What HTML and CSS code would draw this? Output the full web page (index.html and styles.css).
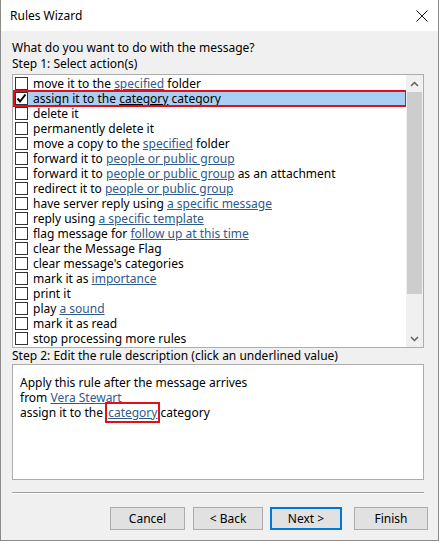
FILE: index.html
```html
<!DOCTYPE html>
<html lang="en">
<head>
    <meta charset="UTF-8">
    <title>Rules Wizard</title>
    <link rel="stylesheet" href="styles.css">
</head>
<body>
    <div class="dialog">
        <div class="titlebar">
            <span>Rules Wizard</span>
            <svg class="close" width="12" height="12" viewBox="0 0 12 12"><path d="M0.5 0.5 L11.5 11.5 M11.5 0.5 L0.5 11.5" stroke="#111" stroke-width="1" fill="none"/></svg>
        </div>

        <div class="content">
            <p class="label">What do you want to do with the message?</p>
            <p class="label">Step 1: Select action(s)</p>

            <div class="listbox">
                <ul class="items">
                    <li><span class="cb"></span><span class="text">move it to the <a>specified</a> folder</span></li>
                    <li class="selected"><span class="cb"><svg width="11" height="11" viewBox="0 0 11 11"><path d="M1.5 5.5 L4 8.5 L9.5 1.5" stroke="#000" stroke-width="2" fill="none"/></svg></span><span class="text">assign it to the <a class="plain">category</a> category</span></li>
                    <li><span class="cb"></span><span class="text">delete it</span></li>
                    <li><span class="cb"></span><span class="text">permanently delete it</span></li>
                    <li><span class="cb"></span><span class="text">move a copy to the <a>specified</a> folder</span></li>
                    <li><span class="cb"></span><span class="text">forward it to <a>people or public group</a></span></li>
                    <li><span class="cb"></span><span class="text">forward it to <a>people or public group</a> as an attachment</span></li>
                    <li><span class="cb"></span><span class="text">redirect it to <a>people or public group</a></span></li>
                    <li><span class="cb"></span><span class="text">have server reply using <a>a specific message</a></span></li>
                    <li><span class="cb"></span><span class="text">reply using <a>a specific template</a></span></li>
                    <li><span class="cb"></span><span class="text">flag message for <a>follow up at this time</a></span></li>
                    <li><span class="cb"></span><span class="text">clear the Message Flag</span></li>
                    <li><span class="cb"></span><span class="text">clear message's categories</span></li>
                    <li><span class="cb"></span><span class="text">mark it as <a>importance</a></span></li>
                    <li><span class="cb"></span><span class="text">print it</span></li>
                    <li><span class="cb"></span><span class="text">play <a>a sound</a></span></li>
                    <li><span class="cb"></span><span class="text">mark it as read</span></li>
                    <li><span class="cb"></span><span class="text">stop processing more rules</span></li>
                </ul>
                <div class="scrollbar">
                    <div class="arrow"><svg width="9" height="6" viewBox="0 0 9 6"><path d="M1 5 L4.5 1.5 L8 5" stroke="#606060" stroke-width="1.5" fill="none"/></svg></div>
                    <div class="track"><div class="thumb"></div></div>
                    <div class="arrow"><svg width="9" height="6" viewBox="0 0 9 6"><path d="M1 1 L4.5 4.5 L8 1" stroke="#606060" stroke-width="1.5" fill="none"/></svg></div>
                </div>
            </div>

            <p class="label">Step 2: Edit the rule description (click an underlined value)</p>
            <div class="description">
                <p>Apply this rule after the message arrives</p>
                <p>from <a>Vera Stewart</a></p>
                <p>assign it to the <a class="boxed">category</a>category</p>
            </div>
        </div>

        <div class="separator"></div>

        <div class="buttons">
            <button class="cancel">Cancel</button>
            <button class="back">&lt; Back</button>
            <button class="next">Next &gt;</button>
            <button class="finish">Finish</button>
        </div>
    </div>
</body>
</html>
```

FILE: styles.css
```css
body {
    margin: 0;
    font-family: "Noto Sans", "Open Sans", sans-serif;
    font-size: 12px;
    color: #000;
}
.dialog {
    width: 437px;
    height: 540px;
    background: #f0f0f0;
    border: 1px solid #8a8a8a;
    border-top: none;
}
.titlebar {
    height: 31px;
    background: #fff;
    display: flex;
    align-items: center;
    justify-content: space-between;
    padding: 0 10px 0 9px;
}
.close {
    display: block;
}
.content {
    padding: 9px 14px 0 11px;
}
.label {
    margin: 0;
    line-height: 16px;
}
.listbox {
    margin-top: 2px;
    height: 274px;
    box-sizing: border-box;
    background: #fff;
    border: 1px solid #adadad;
    display: flex;
}
.items {
    flex: 1;
    list-style: none;
    margin: 0;
    padding: 1px 0 0 1px;
    overflow: hidden;
}
.items li {
    height: 15px;
    display: flex;
    align-items: center;
    white-space: nowrap;
}
.items li.selected {
    background: #a9d0f2;
    outline: 2px solid #e20e1c;
    outline-offset: -1px;
}
.text {
    line-height: 15px;
    height: 15px;
    overflow: hidden;
}
.cb {
    width: 11px;
    height: 11px;
    border: 1px solid #333;
    background: #fff;
    margin: 0 5px 0 1px;
    flex: none;
    display: flex;
    align-items: center;
    justify-content: center;
}
.cb svg {
    display: block;
}
a {
    color: #2f5a8a;
    text-decoration: underline;
}
a.plain {
    color: #000;
}
.scrollbar {
    width: 17px;
    display: flex;
    flex-direction: column;
    background: #f0f0f0;
}
.arrow {
    height: 17px;
    display: flex;
    align-items: center;
    justify-content: center;
}
.track {
    flex: 1;
}
.thumb {
    height: 202px;
    margin: 0 1px;
    background: #cdcdcd;
}
.description {
    margin-top: 0;
    height: 116px;
    box-sizing: border-box;
    background: #fff;
    border: 1px solid #adadad;
    padding: 10px 0 0 7px;
}
.description p {
    margin: 0;
    line-height: 15px;
    height: 15px;
}
.boxed {
    outline: 2px solid #e20e1c;
    padding: 0 1px;
    margin: 0 2px 0 1px;
}
.separator {
    margin: 12px 14px 0 11px;
    border-top: 1px solid #a0a0a0;
    border-bottom: 1px solid #fff;
}
.buttons {
    display: flex;
    padding: 13px 0 0 109px;
}
.buttons button {
    height: 23px;
    font-family: inherit;
    font-size: 12px;
    background: #e1e1e1;
    border: 1px solid #adadad;
    padding: 0;
}
.cancel {
    width: 75px;
}
.back {
    width: 70px;
    margin-left: 8px;
}
.buttons button.next {
    width: 72px;
    margin-left: 7px;
    border: 2px solid #0078d7;
}
.finish {
    width: 74px;
    margin-left: 12px;
}
```
